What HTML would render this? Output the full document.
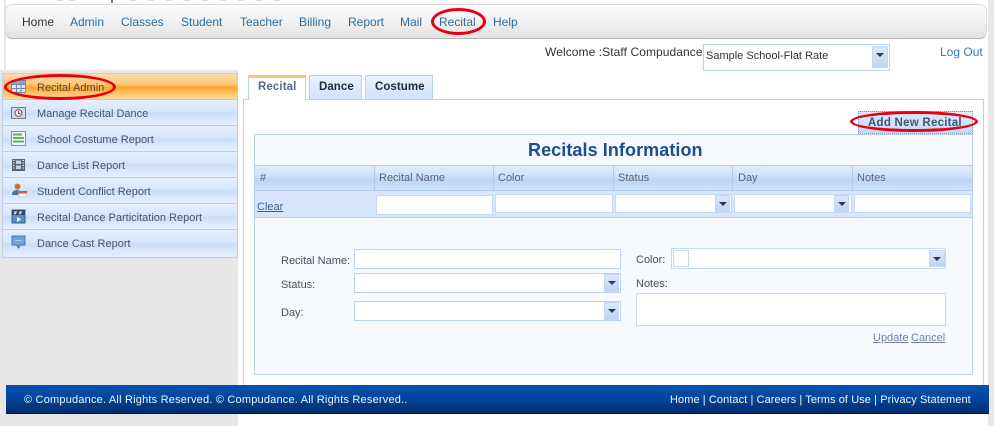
<!DOCTYPE html>
<html><head><meta charset="utf-8"><style>
html,body{margin:0;padding:0;background:#fff;width:1000px;height:426px;overflow:hidden}
body{font-family:"Liberation Sans",sans-serif;font-size:12px;color:#333}
#w{position:absolute;left:0;top:0;width:1000px;height:426px;background:#fff;filter:blur(.3px);overflow:hidden}
.a{position:absolute;box-sizing:border-box}
.t{position:absolute;white-space:nowrap;line-height:14px}
.nv{color:#2b6d9f;font-size:12px;top:15px}
.item{position:absolute;left:3px;width:234px;height:26px;box-sizing:border-box;border-bottom:1px solid #b7d0f2;background:linear-gradient(#e3eefe 0,#d9e8fc 40%,#c9def9 55%,#d9e8fc 75%,#e4effe 100%);color:#4a5568;font-size:11px;line-height:28px;padding-left:34px;white-space:nowrap}
.item svg{position:absolute;left:8px;top:6px}
.th{position:absolute;top:165px;height:26px;box-sizing:border-box;border-right:1px solid #aecbef;color:#5a6578;font-size:11px;line-height:27px;padding-left:5px;white-space:nowrap}
.inp{position:absolute;box-sizing:border-box;background:#fff;border:1px solid #c5d8f4}
.btn{position:absolute;box-sizing:border-box;width:15px;background:linear-gradient(#dbe8fb,#bdd4f5);border:1px solid #c4d7f2}
.btn:after{content:"";position:absolute;left:3px;top:6px;border-left:4px solid transparent;border-right:4px solid transparent;border-top:4px solid #2d3a50}
.lb{position:absolute;white-space:nowrap;font-size:11px;color:#4a4f58;line-height:14px}
.ell{position:absolute;box-sizing:border-box;border:3px solid #e60012;border-radius:50%}
</style></head><body><div id="w">

<!-- top clipped bits -->
<div class="a" style="left:111px;top:0;width:2px;height:3px;background:#777"></div>
<div class="a" style="left:57px;top:0;width:20px;height:1px;background:repeating-linear-gradient(90deg,#ddd 0 6px,#fff 6px 12px)"></div>
<div class="a" style="left:130px;top:0;width:150px;height:1px;background:repeating-linear-gradient(90deg,#ddd 0 6px,#fff 6px 18px)"></div>

<!-- side lines and bands -->
<div class="a" style="left:4px;top:0;width:2px;height:72px;background:#e6e6e6"></div>
<div class="a" style="left:988px;top:0;width:6px;height:426px;background:#e8e8e8"></div>
<div class="a" style="left:0;top:70px;width:238px;height:356px;background:#e7e7e7"></div>

<!-- nav -->
<div class="a" style="left:5px;top:4px;width:982px;height:35px;border:1px solid #dcdcdc;border-bottom:1px solid #b4b4b4;border-radius:7px;background:linear-gradient(#fbfbfb,#f3f3f3 45%,#e2e2e2)"></div>
<div class="t nv" style="left:22px;color:#333">Home</div>
<div class="t nv" style="left:70px">Admin</div>
<div class="t nv" style="left:121px">Classes</div>
<div class="t nv" style="left:181px">Student</div>
<div class="t nv" style="left:240px">Teacher</div>
<div class="t nv" style="left:299px">Billing</div>
<div class="t nv" style="left:348px">Report</div>
<div class="t nv" style="left:400px">Mail</div>
<div class="t nv" style="left:439px">Recital</div>
<div class="t nv" style="left:493px">Help</div>
<div class="ell" style="left:431px;top:8px;width:55px;height:27px"></div>

<!-- welcome -->
<div class="t" style="left:545px;top:45px;color:#333;letter-spacing:.08px">Welcome :Staff Compudance</div>
<div class="inp" style="left:703px;top:44px;width:187px;height:27px;border-color:#bcd2f2"></div>
<div class="t" style="left:706px;top:49px;font-size:11px;color:#333">Sample School-Flat Rate</div>
<div class="btn" style="left:872px;top:46px;height:22px;width:16px"></div>
<div class="t" style="left:940px;top:45px;color:#3a7cb0">Log Out</div>

<!-- sidebar -->
<div class="a" style="left:2px;top:73px;width:236px;height:185px;border:1px solid #b9d1f3;background:#dce9fc"></div>
<div class="item" style="top:74px;background:linear-gradient(#fedca8,#fdc878 40%,#fba72e 55%,#fdc56f 80%,#fedb9e);color:#5b4a30;border-bottom-color:#d9c9a0">Recital Admin
<svg width="16" height="14" viewBox="0 0 16 14"><rect x=".5" y=".5" width="14" height="12" fill="#dfe9f8" stroke="#6f86ad"/><path d="M.5 4.500h14M.5 8.500h14M5.500.5v12M10 .5v12" stroke="#6f86ad" fill="none"/><rect x="1" y="1" width="13" height="3" fill="#8aa5cf"/></svg></div>
<div class="item" style="top:100px">Manage Recital Dance
<svg width="16" height="14" viewBox="0 0 16 14"><rect x=".5" y="1.500" width="14" height="11" fill="#c9d8ec" stroke="#6b7d98"/><circle cx="7.500" cy="7" r="3.400" fill="#f4f4f4" stroke="#b0433a"/><path d="M7.500 5v2.500h2" stroke="#555" fill="none"/></svg></div>
<div class="item" style="top:126px">School Costume Report
<svg width="16" height="15" viewBox="0 0 16 15" style="top:5px"><rect x=".5" y=".5" width="14" height="14" fill="#f1f4f8" stroke="#8292a8"/><path d="M2 3.500h9M2 7h11M2 10.500h11" stroke="#5fb05f" stroke-width="2" fill="none"/></svg></div>
<div class="item" style="top:152px">Dance List Report
<svg width="16" height="14" viewBox="0 0 16 14"><path d="M1 1h13v12H1z" fill="#56657a"/><path d="M5 2.500h5v3.500H5zM5 7.500h5V11H5z" fill="#c7d4e4"/><path d="M2 2.500h1.500M2 5h1.500M2 7.500h1.500M2 10h1.500M11.500 2.500H13M11.500 5H13M11.500 7.500H13M11.500 10H13" stroke="#e6edf5"/></svg></div>
<div class="item" style="top:178px">Student Conflict Report
<svg width="17" height="15" viewBox="0 0 17 15" style="top:5px"><circle cx="6.500" cy="3.500" r="3" fill="#b9793a"/><path d="M1 12c0-4 2.500-5 5.500-5s5.500 1 5.500 5z" fill="#4d6fa6"/><rect x="8" y="8" width="8" height="6" fill="#fff" stroke="#ccc"/><rect x="8" y="8" width="8" height="2.500" fill="#d9534a"/></svg></div>
<div class="item" style="top:204px">Recital Dance Particitation Report
<svg width="16" height="15" viewBox="0 0 16 15" style="top:5px"><rect x="1" y="1" width="13" height="13" fill="#5a8ecb" stroke="#3f5f8c"/><rect x="1" y="1" width="13" height="5" fill="#33496c"/><path d="M3 3h3M8 3h3M3 5l2-1M8 5l2-1" stroke="#fff" fill="none"/><path d="M6 8l4 2.500-4 2.500z" fill="#fff"/></svg></div>
<div class="item" style="top:230px;height:27px;border-bottom:0">Dance Cast Report
<svg width="16" height="14" viewBox="0 0 16 14" style="top:5px"><path d="M1 1h13v9H9.500L7.500 13 5.500 10H1z" fill="#6ea3dc" stroke="#4a77ac"/><path d="M4.500 5.500h6" stroke="#d8e7f8" stroke-dasharray="1.500 1"/></svg></div>
<div class="ell" style="left:4px;top:74px;width:112px;height:26px"></div>

<!-- tabs -->
<div class="a" style="left:243px;top:99px;width:741px;height:287px;border:1px solid #bcd2f0;border-bottom:0;background:#fff"></div>
<div class="a" style="left:248px;top:75px;width:58px;height:25px;background:#fff;border:1px solid #bcd2f0;border-bottom:0;border-top:3px solid #fbc67a"></div>
<div class="t" style="left:258px;top:80px;font-size:11.5px;font-weight:bold;color:#5a6b85;letter-spacing:.1px">Recital</div>
<div class="a" style="left:309px;top:75px;width:53px;height:24px;background:linear-gradient(#eaf2fe,#d0e2fa);border:1px solid #b4cdf0;border-bottom:0"></div>
<div class="t" style="left:319px;top:80px;font-size:11.5px;font-weight:bold;color:#1c2a40;letter-spacing:.05px">Dance</div>
<div class="a" style="left:365px;top:75px;width:68px;height:24px;background:linear-gradient(#eaf2fe,#d0e2fa);border:1px solid #b4cdf0;border-bottom:0"></div>
<div class="t" style="left:375px;top:80px;font-size:11.5px;font-weight:bold;color:#1c2a40;letter-spacing:.05px">Costume</div>

<!-- add button -->
<div class="a" style="left:858px;top:111px;width:115px;height:23px;background:linear-gradient(#dfeafc,#c4d9f7);border:1px dotted #7f95b8"></div>
<div class="t" style="left:868px;top:116px;font-size:11.5px;font-weight:bold;color:#3d5478;letter-spacing:.25px">Add New Recital</div>
<div class="ell" style="left:850px;top:111px;width:128px;height:21px"></div>

<!-- table -->
<div class="a" style="left:254px;top:134px;width:719px;height:241px;border:1px solid #b8cff0;background:#f6f9fe"></div>
<div class="t" style="left:528px;top:140px;font-size:18px;line-height:20px;font-weight:bold;color:#1f4d8c;letter-spacing:.08px">Recitals Information</div>
<div class="a" style="left:255px;top:165px;width:717px;height:26px;background:linear-gradient(#e0ecfd,#cfe1fa 40%,#bcd5f7 60%,#d0e2fb);border-top:1px solid #b2ccef;border-bottom:1px solid #aecbef"></div>
<div class="th" style="left:255px;width:120px">#</div>
<div class="th" style="left:375px;width:119px;padding-left:4px">Recital Name</div>
<div class="th" style="left:494px;width:120px;padding-left:4px">Color</div>
<div class="th" style="left:614px;width:119px;padding-left:4px">Status</div>
<div class="th" style="left:733px;width:120px;padding-left:5px">Day</div>
<div class="th" style="left:853px;width:119px;padding-left:4px;border-right:0">Notes</div>
<div class="a" style="left:255px;top:191px;width:717px;height:27px;background:#d8e6fb;border-bottom:1px solid #bcd2f0"></div>
<div class="t" style="left:257px;top:200px;font-size:11px;color:#3f5f94;text-decoration:underline">Clear</div>
<div class="inp" style="left:376px;top:195px;width:117px;height:20px"></div>
<div class="inp" style="left:495px;top:194px;width:118px;height:19px"></div>
<div class="inp" style="left:615px;top:194px;width:117px;height:19px"></div>
<div class="btn" style="left:715px;top:195px;height:17px"></div>
<div class="inp" style="left:734px;top:194px;width:118px;height:19px"></div>
<div class="btn" style="left:834px;top:195px;height:17px"></div>
<div class="inp" style="left:854px;top:194px;width:117px;height:19px"></div>

<!-- form -->
<div class="lb" style="left:281px;top:254px">Recital Name:</div>
<div class="inp" style="left:354px;top:249px;width:267px;height:20px;border-color:#bcd2f0"></div>
<div class="lb" style="left:281px;top:278px">Status:</div>
<div class="inp" style="left:354px;top:273px;width:267px;height:20px;border-color:#bcd2f0"></div>
<div class="btn" style="left:604px;top:274px;height:18px"></div>
<div class="lb" style="left:281px;top:306px">Day:</div>
<div class="inp" style="left:354px;top:301px;width:267px;height:20px;border-color:#bcd2f0"></div>
<div class="btn" style="left:604px;top:302px;height:18px"></div>
<div class="lb" style="left:636px;top:253px">Color:</div>
<div class="inp" style="left:671px;top:248px;width:275px;height:21px"></div>
<div class="inp" style="left:673px;top:250px;width:16px;height:17px"></div>
<div class="btn" style="left:929px;top:250px;height:17px;width:16px"></div>
<div class="lb" style="left:636px;top:277px">Notes:</div>
<div class="inp" style="left:636px;top:293px;width:310px;height:33px"></div>
<div class="t" style="left:873px;top:331px;font-size:11px;color:#6f7fae;text-decoration:underline">Update</div>
<div class="t" style="left:911px;top:331px;font-size:11px;color:#6f7fae;text-decoration:underline">Cancel</div>

<!-- footer -->
<div class="a" style="left:6px;top:385px;width:983px;height:29px;background:linear-gradient(#0454ad,#03449a 50%,#022c6c);border-bottom:1px solid #111"></div>
<div class="t" style="left:24px;top:393px;font-size:11px;color:#f0f3f8;letter-spacing:.2px">© Compudance. All Rights Reserved. © Compudance. All Rights Reserved..</div>
<div class="t" style="left:670px;top:393px;font-size:11px;color:#f0f3f8;letter-spacing:.08px">Home | Contact | Careers | Terms of Use | Privacy Statement</div>
</div></body></html>
